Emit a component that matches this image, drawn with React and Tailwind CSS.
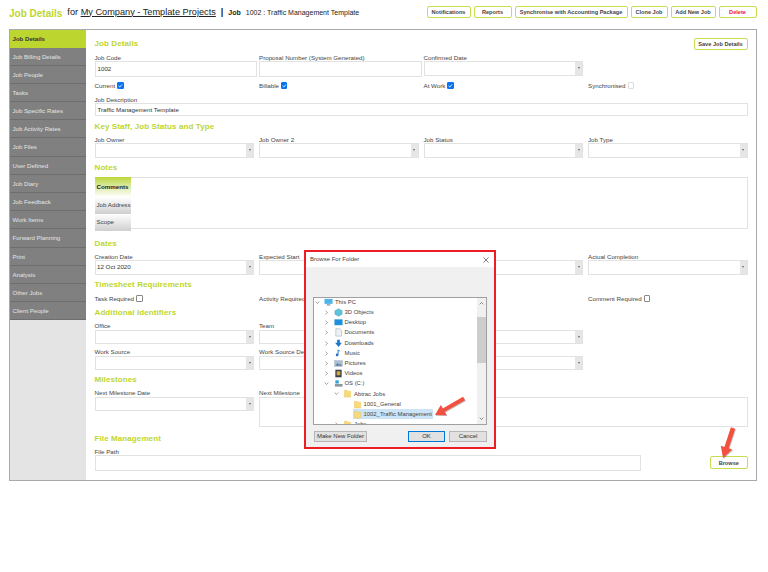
const LIME = "text-[#bdd62f]";

function H({ children, className = "" }) {
  return <div className={`font-bold text-[8px] tracking-[0.1px] leading-[11px] ${LIME} ${className}`}>{children}</div>;
}
function Label({ children, className = "" }) {
  return <div className={`text-[6.2px] leading-[7.5px] h-[7.5px] text-[#444] whitespace-nowrap ${className}`}>{children}</div>;
}
function TextBox({ value, className = "" }) {
  return <div className={`h-[15.5px] border border-[#e2e2e2] bg-white text-[6.2px] leading-[13.5px] pl-[2px] text-[#333] ${className}`}>{value}</div>;
}
function Select({ value, className = "" }) {
  return (
    <div className={`h-[14.5px] border border-[#e2e2e2] bg-white flex text-[6.2px] leading-[12.5px] text-[#333] ${className}`}>
      <div className="flex-1 pl-[1.5px]">{value}</div>
      <div className="w-[7px] bg-[#e6e6e6] flex items-center justify-center">
        <div className="w-0 h-0 border-l-[1.5px] border-r-[1.5px] border-t-[2px] border-l-transparent border-r-transparent border-t-[#666]" />
      </div>
    </div>
  );
}
function Check({ on, dim }) {
  return (
    <span className={`inline-flex items-center justify-center w-[6.5px] h-[6.5px] ml-[2px] rounded-[1px] border ${on ? "bg-[#0a74f0] border-[#0a74f0]" : dim ? "border-[#ddd] bg-white" : "border-[#888] bg-white"}`}>
      {on && (
        <svg viewBox="0 0 8 8" className="w-[5.5px] h-[5.5px]">
          <path d="M1 4.2 3.2 6.3 7 1.8" fill="none" stroke="#fff" strokeWidth="1.5" />
        </svg>
      )}
    </span>
  );
}
function CheckLabel({ text, on, dim }) {
  return (
    <div className="flex items-center h-[8px] text-[6.2px] leading-[8px] text-[#444] whitespace-nowrap">
      {text}
      <Check on={on} dim={dim} />
    </div>
  );
}
function Btn({ children, w, red, className = "" }) {
  return (
    <div className={`h-[12.5px] border border-[#c8dc50] rounded-[2px] bg-white flex items-center justify-center font-bold text-[5.6px] whitespace-nowrap ${red ? "text-[#f0142d]" : "text-[#444]"} ${w} ${className}`}>
      {children}
    </div>
  );
}
function Grid({ children, className = "" }) {
  return <div className={`grid grid-cols-[159.5px_159.5px_159.5px_159.5px] gap-x-[5px] ${className}`}>{children}</div>;
}
function Field({ label, children }) {
  return (
    <div>
      <Label>{label}</Label>
      {children}
    </div>
  );
}

const navItems = ["Job Billing Details","Job People","Tasks","Job Specific Rates","Job Activity Rates","Job Files","User Defined","Job Diary","Job Feedback","Work Items","Forward Planning","Print","Analysis","Other Jobs","Client People"];

function Folder() {
  return (
    <svg viewBox="0 0 10 9" className="w-[9px] h-[9px] shrink-0">
      <path d="M1.5 1h3l1 1h3v6.5h-7z" fill="#f9da78" stroke="#e6c35c" strokeWidth=".5" />
    </svg>
  );
}
function Chevron({ open }) {
  return (
    <svg viewBox="0 0 6 6" className="w-[5px] h-[5px] shrink-0">
      <path d={open ? "M.8 1.8 3 4.2 5.2 1.8" : "M1.8 .8 4.2 3 1.8 5.2"} fill="none" stroke="#777" strokeWidth=".8" />
    </svg>
  );
}
function PcIcon({ kind }) {
  const m = {
    pc: <><rect x="0.5" y="1" width="9" height="5.5" fill="#4fb4e8" /><rect x="3" y="7" width="4" height="1.3" fill="#7a8a99" /></>,
    cube: <path d="M5 .8 9 3v4L5 9.2 1 7V3z" fill="#5cc4dc" stroke="#3a8fa8" strokeWidth=".4" />,
    desktop: <rect x=".5" y="1.5" width="9" height="6.5" fill="#1e8fdc" />,
    docs: <path d="M2 .8h4.5L8.5 3v6h-6.5z" fill="#eef2f6" stroke="#9aa7b3" strokeWidth=".6" />,
    down: <path d="M3.5 .8h3v3.5h2.3L5 8.8 1.2 4.3h2.3z" fill="#1e78d0" />,
    music: <path d="M5 1v5.5a1.5 1.5 0 1 1-1-1.3V.8c1.5 0 2.8 1 3 2.5-.6-.8-1.2-1.2-2-1.3z" fill="#1a6fc4" />,
    pics: <><rect x=".8" y="2" width="8.4" height="6" fill="#a9c0d6" stroke="#7b8ea0" strokeWidth=".4" /><path d="M1.5 7.5 4 4.5l2 2 1-1 2 2z" fill="#5d7f9c" /></>,
    vid: <><rect x="1.5" y=".8" width="7" height="8.4" fill="#38404a" /><rect x="3" y="2.5" width="4" height="4.5" fill="#d8a83a" /></>,
    os: <><rect x="1" y="5.5" width="8.5" height="3" fill="#8c979f" /><rect x="1.5" y="1.5" width="3.8" height="3.5" fill="#35a0dc" /></>,
  };
  return <svg viewBox="0 0 10 10" className="w-[9px] h-[9px] shrink-0">{m[kind]}</svg>;
}
function TreeRow({ indent, chev, icon, label, selected }) {
  return (
    <div className="h-[10.2px] flex items-center text-[5.9px] text-[#444] whitespace-nowrap" style={{ paddingLeft: indent }}>
      <span className="w-[9.5px] shrink-0 flex items-center">{chev && <Chevron open={chev === "open"} />}</span>
      <span className={`flex items-center gap-[1px] ${selected ? "bg-[#cce4f8] pr-[1px] h-[10px]" : ""}`}>
        {icon}
        <span className="ml-[1px]">{label}</span>
      </span>
    </div>
  );
}
function Dialog() {
  return (
    <div className="absolute left-[304px] top-[250px] w-[192px] h-[199px] border-2 border-[#ee1c25] bg-[#f0f0f0] flex flex-col">
      <div className="h-[15px] bg-white flex items-center justify-between pl-[4px] pr-[5px] text-[6px] text-[#444]">
        <span>Browse For Folder</span>
        <svg viewBox="0 0 7 7" className="w-[6px] h-[6px]">
          <path d="M.5.5l6 6M6.5.5l-6 6" stroke="#444" strokeWidth=".8" />
        </svg>
      </div>
      <div className="mt-[29.7px] ml-[7px] w-[174px] h-[128px] bg-white border border-[#a0a0a0] flex overflow-hidden">
        <div className="flex-1 -mt-[0.5px]">
          <TreeRow indent="0.5px" chev="open" icon={<PcIcon kind="pc" />} label="This PC" />
          <TreeRow indent="10px" chev="closed" icon={<PcIcon kind="cube" />} label="3D Objects" />
          <TreeRow indent="10px" chev="closed" icon={<PcIcon kind="desktop" />} label="Desktop" />
          <TreeRow indent="10px" chev="closed" icon={<PcIcon kind="docs" />} label="Documents" />
          <TreeRow indent="10px" chev="closed" icon={<PcIcon kind="down" />} label="Downloads" />
          <TreeRow indent="10px" chev="closed" icon={<PcIcon kind="music" />} label="Music" />
          <TreeRow indent="10px" chev="closed" icon={<PcIcon kind="pics" />} label="Pictures" />
          <TreeRow indent="10px" chev="closed" icon={<PcIcon kind="vid" />} label="Videos" />
          <TreeRow indent="10px" chev="open" icon={<PcIcon kind="os" />} label="OS (C:)" />
          <TreeRow indent="19.5px" chev="open" icon={<Folder />} label="Abtrac Jobs" />
          <TreeRow indent="29px" icon={<Folder />} label="1001_General" />
          <TreeRow indent="29px" icon={<Folder />} label="1002_Traffic Management" selected />
          <TreeRow indent="19.5px" chev="closed" icon={<Folder />} label="Jobs" />
        </div>
        <div className="w-[9px] bg-[#f0f0f0] flex flex-col items-center">
          <svg viewBox="0 0 6 6" className="w-[5px] h-[5px] mt-[3px]"><path d="M.8 4 3 1.8 5.2 4" fill="none" stroke="#555" strokeWidth=".8" /></svg>
          <div className="w-full h-[46px] bg-[#cdcdcd] mt-[11px]" />
          <div className="flex-1" />
          <svg viewBox="0 0 6 6" className="w-[5px] h-[5px] mb-[3px]"><path d="M.8 2 3 4.2 5.2 2" fill="none" stroke="#555" strokeWidth=".8" /></svg>
        </div>
      </div>
      <div className="mt-[6px] ml-[8px] flex text-[6px] text-[#333] whitespace-nowrap">
        <div className="w-[53px] h-[11px] bg-[#e1e1e1] border border-[#b5b5b5] flex items-center justify-center">Make New Folder</div>
        <div className="w-[37px] h-[11px] ml-[41px] bg-[#e1e1e1] border border-[#0078d7] flex items-center justify-center">OK</div>
        <div className="w-[38px] h-[11px] ml-[4px] bg-[#e1e1e1] border border-[#b5b5b5] flex items-center justify-center">Cancel</div>
      </div>
    </div>
  );
}

function Arrow({ className, box, d }) {
  return (
    <svg viewBox={box} className={`absolute ${className}`}>
      <path d={d} fill="#555" opacity=".4" transform="translate(.8 .8)" />
      <path d={d} fill="#f4503f" />
    </svg>
  );
}

export default function App() {
  return (
    <div className="relative w-[768px] h-[572px] bg-white font-['Liberation_Sans',Arial,sans-serif] overflow-hidden">
      <div className="h-[29px] flex items-start pl-[9px] pr-[11.5px]">
        <div className={`mt-[6.5px] font-bold text-[10px] leading-[14px] ${LIME}`}>Job Details</div>
        <div className="mt-[5.5px] ml-[5px] text-[9.2px] leading-[12px] text-[#222] whitespace-nowrap">
          for <span className="underline">My Company - Template Projects</span>
          <span className="ml-[5px] font-bold">|</span>
        </div>
        <div className="mt-[8.5px] ml-[5px] text-[7px] leading-[8px] text-[#222] whitespace-nowrap">
          <span className="font-bold">Job</span>
          <span className="ml-[5px]">1002 : Traffic Management Template</span>
        </div>
        <div className="flex-1" />
        <div className="mt-[5.5px] flex gap-[3px]">
          <Btn w="w-[44px]">Notifications</Btn>
          <Btn w="w-[38px]">Reports</Btn>
          <Btn w="w-[113px]">Synchronise with Accounting Package</Btn>
          <Btn w="w-[37px]">Clone Job</Btn>
          <Btn w="w-[45px]">Add New Job</Btn>
          <Btn w="w-[38px]" red>Delete</Btn>
        </div>
      </div>

      <div className="ml-[9px] w-[748px] h-[452px] border border-[#aaa] flex">
        <div className="w-[76px] bg-[#e4e4e4] shrink-0">
          <div className="h-[17.5px] bg-[#bdd62f] font-bold text-[6.1px] leading-[17px] pl-[2.5px] text-[#333]">Job Details</div>
          {navItems.map((n) => (
            <div key={n} className="h-[18.2px] bg-[#808080] border-b-[1.5px] border-b-[#6e6e6e] text-[6.1px] leading-[17px] pl-[2.5px] text-[#e4e4e4] whitespace-nowrap">
              {n}
            </div>
          ))}
        </div>
        <div className="flex-1 pl-[8.5px] pt-[7.5px] relative">
          <div className="flex justify-between pr-[8.5px] h-[14px]">
            <H>Job Details</H>
            <Btn w="w-[54px]">Save Job Details</Btn>
          </div>
          <Grid className="mt-[2px]">
            <Field label="Job Code"><TextBox value="1002" className="w-[162.5px]" /></Field>
            <Field label="Proposal Number (System Generated)"><TextBox className="w-[162.5px]" /></Field>
            <Field label="Confirmed Date"><Select /></Field>
            <div />
          </Grid>
          <Grid className="mt-[5px]">
            <CheckLabel text="Current" on />
            <CheckLabel text="Billable" on />
            <CheckLabel text="At Work" on />
            <CheckLabel text="Synchronised" dim />
          </Grid>
          <div className="mt-[6px] w-[653px]">
            <Label>Job Description</Label>
            <TextBox value="Traffic Management Template" className="h-[13px]! leading-[11px]!" />
          </div>
          <H className="mt-[4.5px]">Key Staff, Job Status and Type</H>
          <Grid className="mt-[4px]">
            <Field label="Job Owner"><Select /></Field>
            <Field label="Job Owner 2"><Select /></Field>
            <Field label="Job Status"><Select /></Field>
            <Field label="Job Type"><Select /></Field>
          </Grid>
          <H className="mt-[4px]">Notes</H>
          <div className="mt-[4.5px] w-[653px] h-[51.5px] border border-[#e2e2e2] bg-white">
            <div className="w-[36px] -mt-px -ml-px text-[6.2px]">
              <div className="h-[20px] font-bold text-[#222] leading-[20px] pl-[2px] bg-gradient-to-b from-[#bdd62f] to-white">Comments</div>
              <div className="h-[17px] text-[#444] leading-[16px] pl-[2px] whitespace-nowrap bg-gradient-to-b from-white to-[#cfcfcf]">Job Address</div>
              <div className="h-[17px] text-[#444] leading-[16px] pl-[2px] bg-gradient-to-b from-white to-[#cfcfcf]">Scope</div>
            </div>
          </div>
          <H className="mt-[9px]">Dates</H>
          <Grid className="mt-[4px]">
            <Field label="Creation Date"><Select value="12 Oct 2020" /></Field>
            <Field label="Expected Start"><Select /></Field>
            <Field label="Expected Completion"><Select /></Field>
            <Field label="Actual Completion"><Select /></Field>
          </Grid>
          <H className="mt-[4px]">Timesheet Requirements</H>
          <Grid className="mt-[5px]">
            <CheckLabel text="Task Required" />
            <CheckLabel text="Activity Required" />
            <div />
            <CheckLabel text="Comment Required" />
          </Grid>
          <H className="mt-[4px]">Additional Identifiers</H>
          <Grid className="mt-[4.5px]">
            <Field label="Office"><Select /></Field>
            <Field label="Team"><Select /></Field>
            <Field label="Department"><Select /></Field>
            <div />
          </Grid>
          <Grid className="mt-[4.4px]">
            <Field label="Work Source"><Select /></Field>
            <Field label="Work Source Detail"><Select /></Field>
            <Field label="Work Type"><Select /></Field>
            <div />
          </Grid>
          <H className="mt-[4px]">Milestones</H>
          <div className="mt-[3.9px] flex gap-[5px] w-[653px]">
            <Field label="Next Milestone Date"><Select className="w-[159.5px]" /></Field>
            <div className="flex-1">
              <Label>Next Milestone</Label>
              <div className="h-[30px] border border-[#e2e2e2] bg-white" />
            </div>
          </div>
          <H className="mt-[6.3px]">File Management</H>
          <div className="mt-[3.9px] flex w-[653px]">
            <div className="w-[546px]">
              <Label>File Path</Label>
              <TextBox />
            </div>
            <Btn w="w-[37.5px]" className="ml-[69.5px] mt-[8.5px]">Browse</Btn>
          </div>
        </div>
      </div>

      <Dialog />
      <Arrow
        className="left-[432px] top-[395px] w-[34px] h-[22px]"
        box="0 0 34 22"
        d="M3 20 8.8 9.9 10.7 13.4 31 1.8 33 5.2 12.7 16.8 14.6 20.3z"
      />
      <Arrow
        className="left-[716px] top-[426px] w-[22px] h-[35px]"
        box="0 0 22 35"
        d="M7 32 4.8 19.7 8.4 20.9 14.9 1.3 19.1 2.7 12.6 22.3 16.2 23.5z"
      />
    </div>
  );
}
